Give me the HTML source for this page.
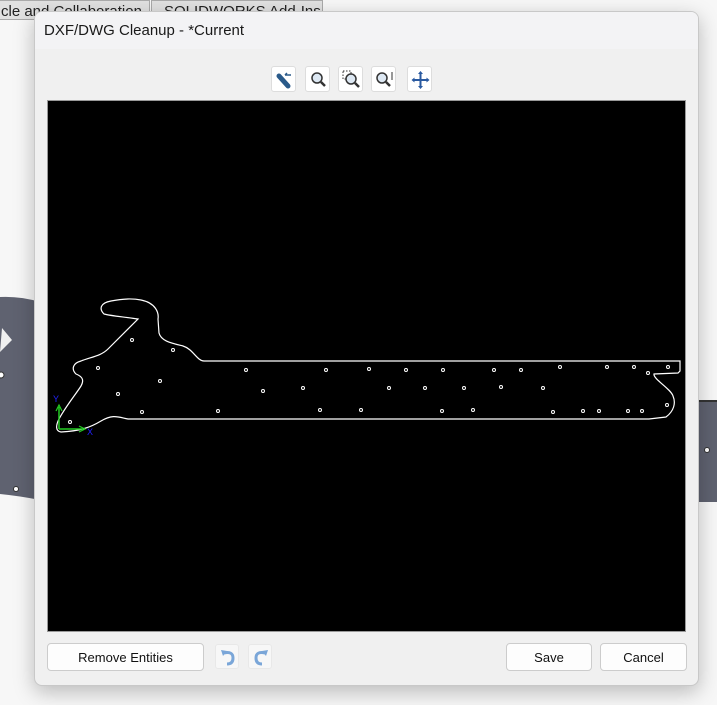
<!DOCTYPE html><html><head><style>
*{margin:0;padding:0;box-sizing:border-box}
body{width:717px;height:705px;overflow:hidden;background:#f7f7f7;font-family:"Liberation Sans",sans-serif;position:relative}
.tab{position:absolute;top:0;height:20px;background:#e1e1e1;border:1px solid #aaa;font-size:15px;color:#222;line-height:22px;overflow:hidden;white-space:nowrap}
.dlg{position:absolute;left:34px;top:11px;width:665px;height:675px;background:#f0f0f0;border:1px solid #c8c8c8;border-radius:8px;box-shadow:0 6px 20px rgba(0,0,0,.25);overflow:hidden}
.title{height:37px;background:#f3f3f5;font-size:15px;color:#1a1a1a;padding:10px 0 0 9px}
.tb{position:absolute;top:54px;width:25px;height:26px;background:#fff;border:1px solid #ddd;border-radius:3px}
.btn{position:absolute;top:631px;height:28px;background:#fdfdfd;border:1px solid #ccc;border-radius:4px;font-size:13px;text-align:center;line-height:27px;color:#111}
.ib{position:absolute;top:632px;width:24px;height:25px;background:#f7f7f7;border:1px solid #e8e8e8;border-radius:3px}
</style></head><body>
<div class="tab" style="left:-2px;width:152px;padding-left:2px">cle and Collaboration</div>
<div class="tab" style="left:151px;width:172px;padding-left:12px">SOLIDWORKS Add-Ins</div>
<svg style="position:absolute;left:0;top:290px" width="40" height="215"><path d="M0 7 Q20 6 40 12 L40 210 Q20 206 0 204Z" fill="#5f6270"/><path d="M2 38 L12 50 L0 62Z" fill="#f0f0f0"/><circle cx="1" cy="85" r="3" fill="#fff" stroke="#333"/><circle cx="16" cy="199" r="2.5" fill="#fff" stroke="#333"/></svg>
<svg style="position:absolute;left:695px;top:400px" width="22" height="102"><rect x="0" y="0" width="22" height="102" fill="#5f6270"/><rect x="0" y="0" width="22" height="2" fill="#333"/><circle cx="12" cy="50" r="2.5" fill="#fff" stroke="#333"/></svg>
<div class="dlg">
<div class="title">DXF/DWG Cleanup - *Current</div>
<div class="tb" style="left:236px"><svg width="25" height="26"><path d="M7 9 L16 19" stroke="#2a5a8a" stroke-width="5" stroke-linecap="round"/><path d="M13 8 L19 8 M13 8 L15 6" stroke="#2a5a8a" stroke-width="1.5" fill="none"/></svg></div>
<div class="tb" style="left:270px"><svg width="25" height="26"><circle cx="11" cy="11" r="5" fill="#dde8f3" stroke="#333" stroke-width="1.5"/><path d="M15 15 L19 19" stroke="#333" stroke-width="2.5"/></svg></div>
<div class="tb" style="left:303px"><svg width="25" height="26"><rect x="4" y="4" width="8" height="8" fill="none" stroke="#333" stroke-dasharray="1.5"/><circle cx="12" cy="12" r="5" fill="#dde8f3" stroke="#333" stroke-width="1.5"/><path d="M16 16 L20 20" stroke="#333" stroke-width="2.5"/></svg></div>
<div class="tb" style="left:336px"><svg width="25" height="26"><circle cx="10" cy="11" r="5" fill="#dde8f3" stroke="#333" stroke-width="1.5"/><path d="M14 15 L18 19" stroke="#333" stroke-width="2.5"/><path d="M20 5 L20 13" stroke="#333"/></svg></div>
<div class="tb" style="left:372px"><svg width="25" height="26"><path d="M12.5 5 L12.5 21 M4.5 13 L20.5 13" stroke="#2a5aa0" stroke-width="2"/><path d="M12.5 4 L10 7 L15 7Z M12.5 22 L10 19 L15 19Z M3.5 13 L6.5 10.5 L6.5 15.5Z M21.5 13 L18.5 10.5 L18.5 15.5Z" fill="#2a5aa0"/></svg></div>
<svg style="position:absolute;left:12px;top:88px" width="639" height="532"><rect x="0.5" y="0.5" width="638" height="531" fill="#000" stroke="#999"/>
<g transform="translate(-46,-99)" fill="none" stroke="#fff" stroke-width="1.2">
<path d="M203 360 L679 360 L679 370 L677 372 L653 373 C652 378 670 388 672 395 C675 402 673 410 665 416 L648 418 L127 418 C117 416 112 413 100 420 C90 426 80 430 60 431 C54 430 55 424 58 418 C65 405 75 393 80 385 C84 378 80 375 75 373 C70 368 72 362 80 360 C90 356 100 355 107 348 L137 318 C125 316 110 315 103 313 C98 308 99 302 110 300 C120 298 130 297 140 299 C155 302 158 312 157 318 L158 332 C160 340 170 342 182 345 C192 348 196 360 203 360 Z"/>
<g fill="none" stroke="#fff" stroke-width="1">
<circle cx="131" cy="339" r="1.5"/><circle cx="172" cy="349" r="1.5"/><circle cx="97" cy="367" r="1.5"/><circle cx="159" cy="380" r="1.5"/><circle cx="117" cy="393" r="1.5"/><circle cx="141" cy="411" r="1.5"/><circle cx="69" cy="421" r="1.5"/><circle cx="245" cy="369" r="1.5"/><circle cx="262" cy="390" r="1.5"/><circle cx="217" cy="410" r="1.5"/><circle cx="302" cy="387" r="1.5"/><circle cx="325" cy="369" r="1.5"/><circle cx="319" cy="409" r="1.5"/><circle cx="368" cy="368" r="1.5"/><circle cx="388" cy="387" r="1.5"/><circle cx="360" cy="409" r="1.5"/><circle cx="405" cy="369" r="1.5"/><circle cx="424" cy="387" r="1.5"/><circle cx="442" cy="369" r="1.5"/><circle cx="441" cy="410" r="1.5"/><circle cx="463" cy="387" r="1.5"/><circle cx="472" cy="409" r="1.5"/><circle cx="493" cy="369" r="1.5"/><circle cx="500" cy="386" r="1.5"/><circle cx="520" cy="369" r="1.5"/><circle cx="542" cy="387" r="1.5"/><circle cx="552" cy="411" r="1.5"/><circle cx="559" cy="366" r="1.5"/><circle cx="582" cy="410" r="1.5"/><circle cx="598" cy="410" r="1.5"/><circle cx="606" cy="366" r="1.5"/><circle cx="627" cy="410" r="1.5"/><circle cx="633" cy="366" r="1.5"/><circle cx="647" cy="372" r="1.5"/><circle cx="641" cy="410" r="1.5"/><circle cx="667" cy="366" r="1.5"/><circle cx="666" cy="404" r="1.5"/>
</g>
<path d="M58 428 L58 406 M58 428 L82 428" stroke="#2c2" stroke-width="1.5"/>
<path d="M55 410 L58 404 L61 410 M78 425 L84 428 L78 431" stroke="#2c2"/>
<text x="52" y="401" fill="#22f" stroke="none" font-size="9">Y</text><text x="86" y="434" fill="#22f" stroke="none" font-size="9">X</text>
</g></svg>
<div class="btn" style="left:12px;width:157px">Remove Entities</div>
<div class="ib" style="left:180px"><svg width="24" height="25"><path d="M8 8 Q17 6 17 13 Q17 19 11 19" stroke="#7aa6d8" stroke-width="3" fill="none"/><path d="M5 5 L11 6 L7 11Z" fill="#7aa6d8"/></svg></div>
<div class="ib" style="left:213px"><svg width="24" height="25"><path d="M16 8 Q7 6 7 13 Q7 19 13 19" stroke="#7aa6d8" stroke-width="3" fill="none"/><path d="M19 5 L13 6 L17 11Z" fill="#7aa6d8"/></svg></div>
<div class="btn" style="left:471px;width:86px">Save</div>
<div class="btn" style="left:565px;width:87px">Cancel</div>
</div>
</body></html>
